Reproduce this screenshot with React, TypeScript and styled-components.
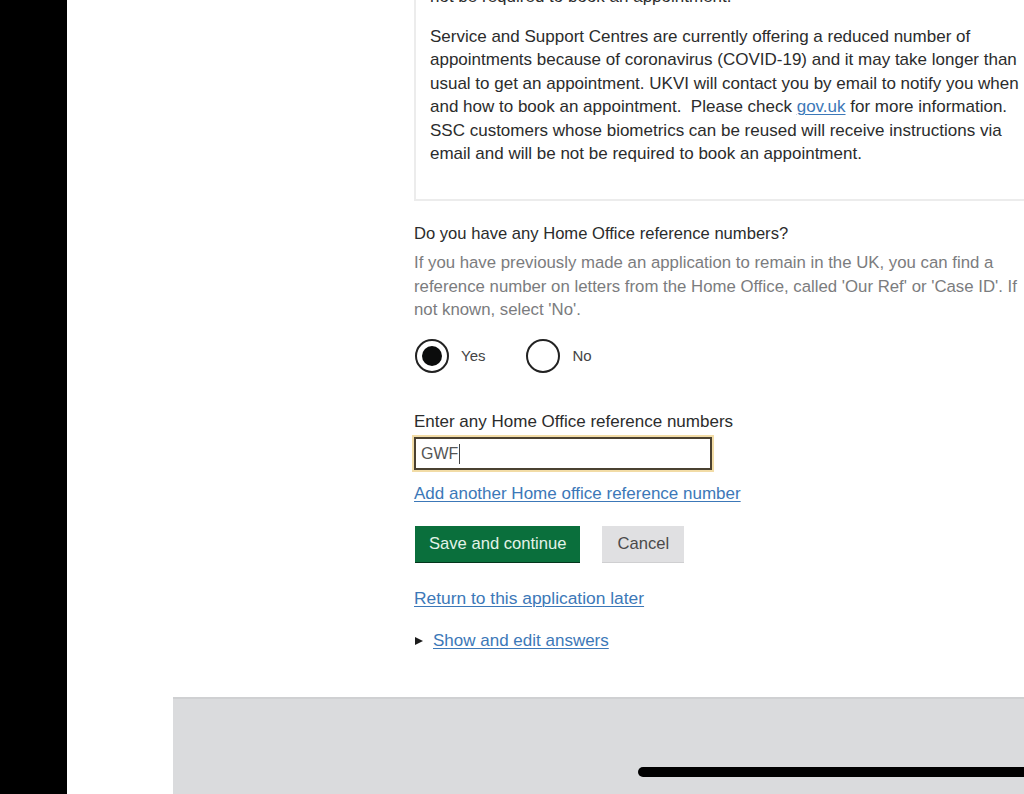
import * as React from "react";
import styled, { createGlobalStyle } from "styled-components";

const GlobalStyle = createGlobalStyle`
  html, body {
    margin: 0;
    padding: 0;
    background: #000;
  }
  body {
    font-family: "Liberation Sans", Arial, sans-serif;
  }
`;

const colors = {
  text: "#2b2c2c",
  hint: "#7b7c7e",
  link: "#3c78b8",
  border: "#ececec",
  green: "#0a6f3c",
  footer: "#dadbdd",
};

const Frame = styled.div`
  width: 1024px;
  height: 794px;
  display: flex;
  flex-flow: row nowrap;
  overflow: hidden;
  position: relative;
  background: #000;
`;

const SideBar = styled.div`
  width: 67px;
  flex: 0 0 67px;
  background: #000;
`;

const Screen = styled.div`
  flex: 1;
  background: #fff;
  display: flex;
  flex-flow: column nowrap;
  overflow: hidden;
`;

// page is scrolled: the end of the previous paragraph sits just above the top edge
const Main = styled.main`
  display: flex;
  flex-flow: column nowrap;
  align-items: flex-start;
  padding-left: 347px;
  margin-top: -15px;
  width: 900px;
  font-size: 17px;
  line-height: 23.5px;
  color: ${colors.text};
`;

const Inset = styled.div`
  align-self: stretch;
  border-left: 2px solid ${colors.border};
  border-bottom: 2px solid ${colors.border};
  padding: 0 0 33px 14px;
`;

const Para = styled.p<{ gap?: number }>`
  margin: 0 0 ${(p) => p.gap ?? 0}px;
  white-space: nowrap;
`;

const Link = styled.a`
  color: ${colors.link};
  text-decoration: underline;
  text-underline-offset: 2px;
  text-decoration-thickness: 1px;
  cursor: pointer;
`;

const Question = styled.div`
  margin-top: 21px;
  font-size: 16.6px;
  color: ${colors.text};
`;

const Hint = styled.div`
  margin-top: 6px;
  font-size: 16.8px;
  color: ${colors.hint};
  white-space: nowrap;
`;

const Radios = styled.div`
  display: flex;
  flex-flow: row nowrap;
  align-items: center;
  gap: 40px;
  margin-top: 17px;
`;

const RadioItem = styled.label`
  display: flex;
  align-items: center;
  gap: 12px;
  color: #444;
  font-size: 15px;
`;

const RadioCircle = styled.span<{ checked?: boolean }>`
  width: 30px;
  height: 30px;
  border: 2px solid #222;
  border-radius: 50%;
  display: flex;
  align-items: center;
  justify-content: center;
  margin-left: 1px;

  &::after {
    content: "";
    width: 20px;
    height: 20px;
    border-radius: 50%;
    background: ${(p) => (p.checked ? "#0b0c0c" : "transparent")};
  }
`;

const FieldLabel = styled.div`
  margin-top: 37px;
  color: ${colors.text};
`;

const TextField = styled.div`
  margin-top: 4px;
  width: 289px;
  height: 29px;
  border: 2px solid #4a4131;
  box-shadow: 0 0 0 2px #f2dca6;
  display: flex;
  align-items: center;
  padding-left: 5px;
  box-sizing: content-box;
  font-size: 16px;
  color: #555;
`;

const Caret = styled.span`
  display: inline-block;
  width: 1px;
  height: 20px;
  background: #444;
  margin-left: 1px;
`;

const AddLink = styled(Link)`
  margin-top: 12px;
`;

const Actions = styled.div`
  display: flex;
  flex-flow: row nowrap;
  gap: 22px;
  margin-top: 20px;
  padding-left: 1px;
`;

const Button = styled.button<{ secondary?: boolean }>`
  font-family: inherit;
  font-size: 16.6px;
  height: 36px;
  border: 0;
  padding: 0 ${(p) => (p.secondary ? 15 : 14)}px;
  cursor: pointer;
  background: ${(p) => (p.secondary ? "#e0e0e2" : colors.green)};
  color: ${(p) => (p.secondary ? "#4a4a4a" : "#e3f3e8")};
  box-shadow: ${(p) => (p.secondary ? "0 1px 0 #cfcfd1" : "0 1px 0 #04351c")};
`;

const ReturnLink = styled(Link)`
  margin-top: 25px;
  font-size: 17.4px;
`;

const Details = styled.div`
  display: flex;
  align-items: center;
  gap: 10px;
  margin-top: 19px;
  padding-left: 1px;
`;

const Arrow = styled.span`
  width: 0;
  height: 0;
  border-top: 4.5px solid transparent;
  border-bottom: 4.5px solid transparent;
  border-left: 8px solid #1c1c1c;
`;

const Footer = styled.footer`
  margin-top: 44px;
  margin-left: 106px;
  flex: 1;
  background: ${colors.footer};
  border-top: 2px solid #cfd0d2;
  min-height: 100px;
`;

const HomeIndicator = styled.div`
  position: absolute;
  left: 638px;
  top: 767px;
  width: 420px;
  height: 10px;
  border-radius: 5px;
  background: #000;
`;

export default function App() {
  return (
    <>
      <GlobalStyle />
      <Frame>
        <SideBar />
        <Screen>
          <Main>
            <Inset>
              <Para gap={16}>not be required to book an appointment.</Para>
              <Para>
                Service and Support Centres are currently offering a reduced number of
                <br />
                appointments because of coronavirus (COVID-19) and it may take longer than
                <br />
                usual to get an appointment. UKVI will contact you by email to notify you when
                <br />
                and how to book an appointment.&nbsp; Please check <Link>gov.uk</Link> for
                more information.
                <br />
                SSC customers whose biometrics can be reused will receive instructions via
                <br />
                email and will be not be required to book an appointment.
              </Para>
            </Inset>

            <Question>Do you have any Home Office reference numbers?</Question>
            <Hint>
              If you have previously made an application to remain in the UK, you can find a
              <br />
              reference number on letters from the Home Office, called 'Our Ref' or 'Case ID'. If
              <br />
              not known, select 'No'.
            </Hint>

            <Radios>
              <RadioItem>
                <RadioCircle checked />
                Yes
              </RadioItem>
              <RadioItem>
                <RadioCircle />
                No
              </RadioItem>
            </Radios>

            <FieldLabel>Enter any Home Office reference numbers</FieldLabel>
            <TextField>
              GWF
              <Caret />
            </TextField>
            <AddLink>Add another Home office reference number</AddLink>

            <Actions>
              <Button>Save and continue</Button>
              <Button secondary>Cancel</Button>
            </Actions>

            <ReturnLink>Return to this application later</ReturnLink>

            <Details>
              <Arrow />
              <Link>Show and edit answers</Link>
            </Details>
          </Main>
          <Footer />
        </Screen>
        <HomeIndicator />
      </Frame>
    </>
  );
}
